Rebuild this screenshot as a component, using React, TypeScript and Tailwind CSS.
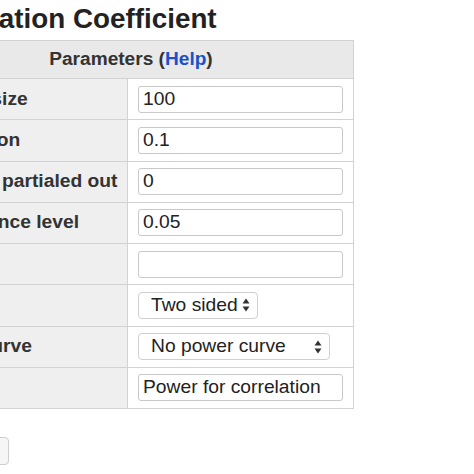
import React from 'react';

const rows: { label: string; kind: 'input' | 'select'; value: string; width?: string }[] = [
  { label: 'Sample size', kind: 'input', value: '100' },
  { label: 'Correlation', kind: 'input', value: '0.1' },
  { label: 'Controls partialed out', kind: 'input', value: '0' },
  { label: 'Significance level', kind: 'input', value: '0.05' },
  { label: 'Power', kind: 'input', value: '' },
  { label: 'Tails', kind: 'select', value: 'Two sided', width: 'w-[120px]' },
  { label: 'Power curve', kind: 'select', value: 'No power curve', width: 'w-[192px]' },
  { label: 'Note', kind: 'input', value: 'Power for correlation' },
];

function Arrows() {
  return (
    <svg width="8" height="14" viewBox="0 0 8 14" className="shrink-0">
      <polygon points="4,0.5 7.5,5.5 0.5,5.5" fill="#333" />
      <polygon points="0.5,8.5 7.5,8.5 4,13.5" fill="#333" />
    </svg>
  );
}

export default function App() {
  return (
    <div className="w-[474px] h-[474px] overflow-hidden bg-white font-['Liberation_Sans',Arial,sans-serif] text-[#333]">
      {/* Page title, scrolled off to the left */}
      <h1 className="-ml-[83px] h-[40px] whitespace-nowrap pt-[3px] text-[27.8px] font-bold leading-[32px] text-[#222]">
        Correlation Coefficient
      </h1>

      <div className="-ml-[92px] w-[446px]">
        {/* Parameters table */}
        <div className="border-x border-t border-[#d2d2d2]">
          <div className="flex h-[38px] items-center justify-center border-b border-[#d2d2d2] bg-[#e9e9e9] text-[19.1px] font-bold">
            Parameters (<a className="text-[#1b50c8]">Help</a>)
          </div>
          {rows.map((r) => (
            <div key={r.label} className="flex h-[41.25px] border-b border-[#d2d2d2]">
              <div className="flex w-[219px] shrink-0 items-center whitespace-nowrap border-r border-[#d2d2d2] bg-[#efefef] pl-[8.5px] text-[19.25px] font-bold">
                {r.label}
              </div>
              <div className="flex flex-1 items-center pl-[10px]">
                {r.kind === 'input' ? (
                  <input
                    readOnly
                    value={r.value}
                    className="h-[27px] w-[205px] rounded-[3px] border border-[#c9c9c9] bg-white px-[4px] text-[19.25px] text-[#222] outline-none"
                  />
                ) : (
                  <div
                    className={`flex h-[27px] ${r.width} items-center justify-between rounded-[4px] border border-[#cfcfcf] bg-white pl-[12px] pr-[7px] text-[19.25px] text-[#222]`}
                  >
                    <span>{r.value}</span>
                    <Arrows />
                  </div>
                )}
              </div>
            </div>
          ))}
        </div>

        <button className="mt-[28px] h-[28px] w-[101px] rounded-[4px] border border-[#cfcfcf] bg-[#f6f6f6] text-[19.25px] text-[#222]">
          Calculate
        </button>
      </div>
    </div>
  );
}
